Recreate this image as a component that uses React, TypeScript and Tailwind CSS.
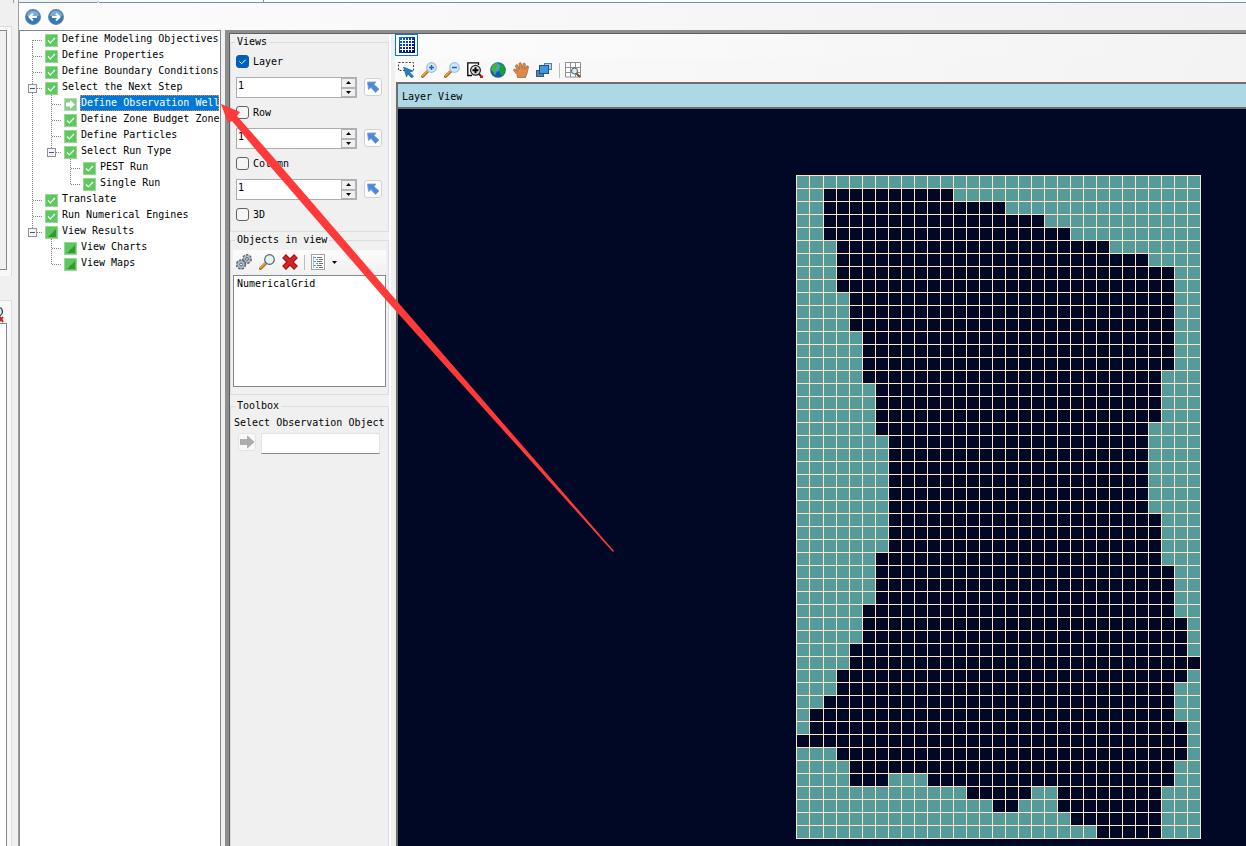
import { useState } from "react";
import type { ReactNode } from "react";
import clsx from "clsx";

type Guide = "first" | "tee" | "end" | "line" | "blank";
type NodeIcon = "check" | "arrow" | "pending";

type TreeRow = {
  label: string;
  guides: Guide[];
  icon: NodeIcon;
  expanded?: boolean;
};

const TREE: TreeRow[] = [
  { label: "Define Modeling Objectives", guides: ["first"], icon: "check" },
  { label: "Define Properties", guides: ["tee"], icon: "check" },
  { label: "Define Boundary Conditions", guides: ["tee"], icon: "check" },
  { label: "Select the Next Step", guides: ["tee"], icon: "check", expanded: true },
  { label: "Define Observation Well", guides: ["line", "tee"], icon: "arrow" },
  { label: "Define Zone Budget Zone", guides: ["line", "tee"], icon: "check" },
  { label: "Define Particles", guides: ["line", "tee"], icon: "check" },
  { label: "Select Run Type", guides: ["line", "end"], icon: "check", expanded: true },
  { label: "PEST Run", guides: ["line", "blank", "tee"], icon: "check" },
  { label: "Single Run", guides: ["line", "blank", "end"], icon: "check" },
  { label: "Translate", guides: ["tee"], icon: "check" },
  { label: "Run Numerical Engines", guides: ["tee"], icon: "check" },
  { label: "View Results", guides: ["end"], icon: "pending", expanded: true },
  { label: "View Charts", guides: ["blank", "tee"], icon: "pending" },
  { label: "View Maps", guides: ["blank", "end"], icon: "pending" },
];

const COLS = 31;
const ROWS = 51;

// inactive cells as [first row, last row, first column, end column]
const INACTIVE: [number, number, number, number][] = [
  [0, 0, 0, 31],
  // west side
  [1, 4, 0, 2],
  [5, 8, 0, 3],
  [9, 11, 0, 4],
  [12, 15, 0, 5],
  [16, 19, 0, 6],
  [20, 28, 0, 7],
  [29, 32, 0, 6],
  [33, 35, 0, 5],
  [36, 37, 0, 4],
  [38, 39, 0, 3],
  [40, 40, 0, 2],
  [41, 42, 0, 1],
  [44, 44, 0, 3],
  [45, 46, 0, 4],
  // east side
  [1, 1, 12, 31],
  [2, 2, 16, 31],
  [3, 3, 19, 31],
  [4, 4, 21, 31],
  [5, 5, 24, 31],
  [6, 6, 27, 31],
  [7, 14, 29, 31],
  [15, 18, 28, 31],
  [19, 25, 27, 31],
  [26, 29, 28, 31],
  [30, 33, 29, 31],
  [34, 36, 30, 31],
  [38, 38, 30, 31],
  [39, 41, 29, 31],
  [42, 44, 30, 31],
  [45, 46, 29, 31],
  [47, 50, 28, 31],
  // south side
  [46, 46, 7, 10],
  [47, 47, 0, 13],
  [47, 47, 18, 20],
  [48, 48, 0, 15],
  [48, 48, 17, 20],
  [49, 49, 0, 21],
  [50, 50, 0, 23],
];

const colX = (c: number) => c * 13 + (c >= 2 ? 1 : 0);
const rowY = (r: number) => r * 13;

function NumericalGrid() {
  return (
    <svg
      width={405}
      height={664}
      shapeRendering="crispEdges"
      className="block shrink-0"
      role="img"
      aria-label="NumericalGrid"
    >
      {INACTIVE.map(([r0, r1, c0, c1]) => (
        <rect
          key={`${r0}-${c0}-${c1}`}
          x={colX(c0)}
          y={rowY(r0)}
          width={colX(c1) - colX(c0)}
          height={rowY(r1 + 1) - rowY(r0)}
          fill="#569b9b"
        />
      ))}
      {Array.from({ length: COLS + 1 }, (_, c) => (
        <rect key={`c${c}`} x={colX(c)} y={0} width={1} height={664} fill="#ffe4c4" />
      ))}
      {Array.from({ length: ROWS + 1 }, (_, r) => (
        <rect key={`r${r}`} x={0} y={rowY(r)} width={405} height={1} fill="#ffe4c4" />
      ))}
    </svg>
  );
}

function GuideCell({ guide, box }: { guide: Guide; box: boolean }) {
  const top = guide === "first" ? 9 : 0;
  const bottom = guide === "end" ? 9 : 16;
  return (
    <svg width={19} height={16} className="shrink-0" shapeRendering="crispEdges" aria-hidden>
      {guide !== "blank" && (
        <path d={`M9.5 ${top}V${bottom}`} stroke="#808080" strokeDasharray="1 1" />
      )}
      {guide !== "blank" && guide !== "line" && (
        <path d="M10 9.5H19" stroke="#808080" strokeDasharray="1 1" />
      )}
      {box && (
        <>
          <rect x={5.5} y={5.5} width={8} height={8} fill="#f6f6f6" stroke="#919191" />
          <path d="M7 9.5h5" stroke="#3c55a0" />
        </>
      )}
    </svg>
  );
}

function StepIcon({ icon }: { icon: NodeIcon }) {
  return (
    <svg width={13} height={13} viewBox="0 0 13 13" className="mt-[3px] ml-[3px] shrink-0" aria-hidden>
      <rect width={13} height={13} fill={icon === "arrow" ? "#b4dcb4" : "#9ad49a"} />
      <rect x={1} y={1} width={11} height={11} fill={icon === "arrow" ? "#84cf84" : "#5cc95c"} />
      {icon === "check" && (
        <path d="M3 6.5L5.3 8.8L10 4" fill="none" stroke="#fff" strokeWidth={1.2} />
      )}
      {icon === "arrow" && <path d="M2 4.500h4V2l5 4.500l-5 4.500V8.500H2z" fill="#fff" />}
      {icon === "pending" && <path d="M11 3V11H3z" fill="#379437" />}
    </svg>
  );
}

function StepTree() {
  const [selected, setSelected] = useState("Define Observation Well");
  return (
    <nav
      aria-label="Workflow"
      className="w-[202px] shrink-0 border-x border-t border-[#828790] bg-white pl-[3px]"
    >
      <ul>
        {TREE.map((row) => {
          const active = row.label === selected;
          return (
            <li key={row.label} className="flex h-4">
              {row.guides.map((g, i) => (
                <GuideCell
                  key={i}
                  guide={g}
                  box={Boolean(row.expanded) && i === row.guides.length - 1}
                />
              ))}
              <StepIcon icon={row.icon} />
              <button
                type="button"
                onClick={() => setSelected(row.label)}
                className={clsx(
                  "ml-[3px] shrink-0 pl-px text-left leading-[16px] whitespace-nowrap",
                  active
                    ? "bg-[#0078d7] text-white outline-1 -outline-offset-1 outline-[#ff8728] outline-dotted"
                    : "text-black"
                )}
              >
                <span className="block h-4 leading-[15px]">{row.label}</span>
              </button>
            </li>
          );
        })}
      </ul>
    </nav>
  );
}

function NavCircle({ label, back }: { label: string; back?: boolean }) {
  return (
    <button type="button" aria-label={label} className="h-4 w-4">
      <svg width={16} height={16} viewBox="0 0 16 16" aria-hidden>
        <circle cx={8} cy={8} r={7.3} fill="#2f78bd" stroke="#62809c" strokeWidth={1.3} />
        <path d="M2 7a6 5.500 0 0 1 12 0q-6 2-12 0z" fill="#76ace0" />
        <path
          d={back ? "M12 8H5M8 4.500L4.500 8L8 11.500" : "M4 8h7M8 4.500L11.500 8L8 11.500"}
          fill="none"
          stroke="#fff"
          strokeWidth={2}
        />
      </svg>
    </button>
  );
}

function Group({
  title,
  className,
  children,
}: {
  title: string;
  className?: string;
  children: ReactNode;
}) {
  return (
    <fieldset className={clsx("min-w-0 border border-[#dcdcdc]", className)}>
      <legend className="ml-1 px-[2px] leading-[14px]">{title}</legend>
      {children}
    </fieldset>
  );
}

function ViewRow({ name, initial }: { name: string; initial?: boolean }) {
  const [on, setOn] = useState(Boolean(initial));
  const [value, setValue] = useState(1);
  return (
    <div className="mb-1">
      <CheckLine name={name} on={on} onChange={setOn} />
      <div className="mt-[6px] flex h-[21px]">
        <div className="flex w-[121px] border border-[#abadb3] bg-white">
          <input
            type="text"
            aria-label={`${name} number`}
            value={value}
            onChange={(e) => setValue(Number(e.target.value) || 1)}
            className="min-w-0 flex-1 px-px pb-[3px] leading-[14px] outline-none"
          />
          <div className="flex w-[15px] flex-col">
            <SpinButton label={`Increase ${name}`} up onClick={() => setValue(value + 1)} />
            <SpinButton
              label={`Decrease ${name}`}
              onClick={() => setValue(Math.max(1, value - 1))}
            />
          </div>
        </div>
        <button
          type="button"
          aria-label={`Pick ${name}`}
          className="mt-px ml-[7px] flex h-[18px] w-[18px] items-center justify-center rounded-[3px] border border-[#d0d0d0] bg-[#fdfdfd]"
        >
          <svg width={14} height={14} viewBox="0 0 14 14" aria-hidden>
            <path
              d="M1.500 2h8.500L8 4.500l5 4.500l-3.500 3.500l-4.500-5L2.500 9.500z"
              fill="#4c8ae0"
              stroke="#7b9cc9"
              strokeWidth={0.8}
            />
          </svg>
        </button>
      </div>
    </div>
  );
}

function SpinButton({ label, up, onClick }: { label: string; up?: boolean; onClick: () => void }) {
  return (
    <button
      type="button"
      aria-label={label}
      onClick={onClick}
      className="flex flex-1 items-center justify-center border border-[#b4b4b4] bg-[#f0f0f0]"
    >
      <svg width={5} height={3} viewBox="0 0 5 3" aria-hidden>
        <path d={up ? "M0 3L2.500 0L5 3z" : "M0 0h5L2.500 3z"} />
      </svg>
    </button>
  );
}

function CheckLine({
  name,
  on,
  onChange,
}: {
  name: string;
  on: boolean;
  onChange: (v: boolean) => void;
}) {
  return (
    <label className="flex h-5 items-center gap-1">
      <span className="relative flex h-[13px] w-[13px]">
        <input
          type="checkbox"
          checked={on}
          onChange={(e) => onChange(e.target.checked)}
          className="h-[13px] w-[13px] appearance-none rounded-[3px] border border-[#626262] bg-[#f5f5f5] checked:border-[#005fb8] checked:bg-[#005fb8]"
        />
        {on && (
          <svg viewBox="0 0 13 13" className="pointer-events-none absolute inset-0" aria-hidden>
            <path d="M3.500 6.500L5.700 8.700L9.700 4.700" fill="none" stroke="#fff" />
          </svg>
        )}
      </span>
      {name}
    </label>
  );
}

function ToolButton({ label, children }: { label: string; children: ReactNode }) {
  return (
    <button type="button" aria-label={label} title={label} className="h-4 w-4 shrink-0">
      <svg width={16} height={16} viewBox="0 0 16 16" aria-hidden>
        {children}
      </svg>
    </button>
  );
}

function Lens({ sign }: { sign?: "plus" | "minus" }) {
  return (
    <>
      <path d="M1.500 14.500L7 9" stroke="#a8641a" strokeWidth={3} strokeLinecap="round" />
      <path d="M1.500 14L6.500 9" stroke="#f0a63c" strokeWidth={1.5} strokeLinecap="round" />
      <circle
        cx={10.5}
        cy={5.5}
        r={4.8}
        fill={sign ? "#d3e8fb" : "#e2f3f8"}
        stroke={sign ? "#9cc0e6" : "#586470"}
        strokeWidth={1.2}
      />
      {sign && <path d="M8 5.500h5" stroke="#1c62c4" strokeWidth={1.5} />}
      {sign === "plus" && <path d="M10.500 3v5" stroke="#1c62c4" strokeWidth={1.5} />}
    </>
  );
}

function Gear({ cx, cy, r }: { cx: number; cy: number; r: number }) {
  return (
    <>
      <circle cx={cx} cy={cy} r={r} fill="#9aa8b4" stroke="#5d6a76" strokeWidth={2.6} strokeDasharray="2.2 1" />
      <circle cx={cx} cy={cy} r={r - 0.3} fill="#aebbc6" />
      <circle cx={cx} cy={cy} r={1.4} fill="#eef2f5" stroke="#4d5a66" strokeWidth={0.9} />
    </>
  );
}

function ObjectsToolbar() {
  return (
    <div className="flex h-[25px] items-center rounded-tr-[3px] bg-linear-to-b from-[#fcfcfc] to-[#f0f0f0] pb-px pl-[3px]">
      <div className="flex gap-[7px]">
        <ToolButton label="Settings">
          <Gear cx={11} cy={5} r={3.7} />
          <Gear cx={5} cy={10.5} r={3.9} />
        </ToolButton>
        <ToolButton label="Zoom to object">
          <Lens />
        </ToolButton>
        <ToolButton label="Remove">
          <path d="M2 2L14 14M14 2L2 14" stroke="#8e1010" strokeWidth={5.4} />
          <path d="M2.500 2.500L13.500 13.500M13.500 2.500L2.500 13.500" stroke="#d92222" strokeWidth={3.6} />
        </ToolButton>
      </div>
      <span className="mx-[6px] h-[15px] w-px bg-[#bdbdbd]" />
      <button type="button" aria-label="List options" className="flex items-center gap-[7px]">
        <svg width={14} height={16} viewBox="0 0 14 16" shapeRendering="crispEdges" aria-hidden>
          <rect x={0.5} y={0.5} width={13} height={15} fill="#fff" stroke="#a3a3a3" />
          <path d="M2.500 2v12" stroke="#9cc3da" />
          <path d="M3 3.500h2M3 7.500h2M3 11.500h2M5 5.500h2M5 9.500h2M5 13.500h2" stroke="#5b93b5" />
          <path d="M6 3.500h5M6 7.500h5M6 11.500h5M8 5.500h4M8 9.500h4M8 13.500h4" stroke="#707070" />
        </svg>
        <svg width={5} height={3} viewBox="0 0 5 3" aria-hidden>
          <path d="M0 0h5L2.500 3z" />
        </svg>
      </button>
    </div>
  );
}

function SidePanel() {
  const [flag3d, setFlag3d] = useState(false);
  return (
    <aside className="flex w-[165px] shrink-0 flex-col border-r-4 border-[#f0f0f0] pt-px">
      <div className="flex flex-1 flex-col border-r-2 border-white">
        <Group title="Views" className="h-[197px]">
          <div className="px-[5px] pt-[2px]">
            <ViewRow name="Layer" initial />
            <ViewRow name="Row" />
            <ViewRow name="Column" />
            <CheckLine name="3D" on={flag3d} onChange={setFlag3d} />
          </div>
        </Group>
        <Group title="Objects in view" className="mt-px h-[162px]">
          <div className="px-[2px] pt-[3px]">
            <ObjectsToolbar />
            <ul className="h-[112px] border border-[#828790] bg-white px-[3px] pt-px leading-[14px]">
              <li>NumericalGrid</li>
            </ul>
          </div>
        </Group>
        <Group title="Toolbox" className="mt-1 flex-1 border-b-0">
          <div className="pt-[3px] pl-[3px]">
            <label htmlFor="observation" className="block leading-[14px] whitespace-nowrap">
              Select Observation Object
            </label>
            <div className="mt-[3px] flex pl-1">
              <button
                type="button"
                disabled
                aria-label="Use selected object"
                className="flex h-[18px] w-[18px] items-center justify-center rounded-[3px] border border-[#e4e4e4] bg-[#f9f9f9]"
              >
                <svg width={14} height={14} viewBox="0 0 14 14" aria-hidden>
                  <path d="M0 4.500h7.500V1L14 7l-6.500 6V9.500H0z" fill="#adadad" stroke="#979797" strokeWidth={0.6} />
                </svg>
              </button>
              <input
                id="observation"
                type="text"
                className="ml-[5px] h-[21px] w-[119px] border border-[#e3e3e3] border-b-[#8a8a8a] bg-white px-1 outline-none"
              />
            </div>
          </div>
        </Group>
      </div>
    </aside>
  );
}

function MapToolbar() {
  return (
    <div className="flex h-6 items-center bg-linear-to-r from-[#fafafa] to-[#f3f3f3] pl-[3px]">
      <div className="flex gap-[7px]">
        <ToolButton label="Select">
          <rect x={0.5} y={0.5} width={15} height={8} fill="none" stroke="#444" strokeDasharray="2 1.500" />
          <path d="M5.500 5l9.500 4l-3.500 1.200l4 4l-1.700 1.700l-4-4L8.500 15z" fill="#217fc4" stroke="#14598f" strokeWidth={0.6} />
        </ToolButton>
        <ToolButton label="Zoom in">
          <Lens sign="plus" />
        </ToolButton>
        <ToolButton label="Zoom out">
          <Lens sign="minus" />
        </ToolButton>
        <ToolButton label="Zoom window">
          <path d="M11.500 3V0.800H0.800V13.500H5" fill="#fff" stroke="#000" strokeWidth={1.3} />
          <circle cx={8.5} cy={8.3} r={4.9} fill="#e4e4e4" stroke="#222" strokeWidth={1.2} />
          <path d="M5.500 8.300h6M8.500 5.300v6" stroke="#000" strokeWidth={2} />
          <path d="M12 12l2 2" stroke="#222" strokeWidth={2} />
          <rect x={13} y={13.5} width={3} height={2.5} fill="#e01010" />
        </ToolButton>
        <ToolButton label="Full extent">
          <circle cx={8} cy={8} r={7.8} fill="#1857b8" />
          <circle cx={6.5} cy={5.5} r={4} fill="#4a9be8" />
          <path d="M2 3.500Q5 0 8 1L7 3.500L8 5L5 7L6.500 10L5 13.500L3 10L1 7.500z" fill="#3fb53f" />
          <path d="M9.500 1Q14 2 15.500 7L14 12L11 14L10 10.500L8.500 8L10 5z" fill="#18a032" />
        </ToolButton>
        <ToolButton label="Pan">
          <path
            d="M4.500 15.500L4 12.500L0.500 8.500Q0.500 6.800 2.200 7.300L4.200 9L2.500 3.500Q3.200 2 4.500 3L6.300 7L6 1.500Q7.300 0 8.300 1.500L9 6.500L10.300 1.500Q11.800 0.500 12.300 2L11.800 7.500L13.500 4Q15 3.300 15.500 4.800L14 11.500L12.500 15.500z"
            fill="#d98a4c"
            stroke="#a25d28"
            strokeWidth={0.7}
          />
        </ToolButton>
        <ToolButton label="Order">
          <rect x={8.5} y={1.5} width={7} height={6} fill="#b5cfe6" stroke="#587fa3" />
          <rect x={0.5} y={8.5} width={7} height={6} fill="#5b7f9f" stroke="#3b5d7d" />
          <rect x={3.5} y={3.5} width={9} height={8} fill="#3e96e0" stroke="#1c5487" />
        </ToolButton>
      </div>
      <span className="mr-[5px] ml-[7px] h-[15px] w-px bg-[#bdbdbd]" />
      <ToolButton label="Inspect cell">
        <path
          d="M0.500 0.500h15v14.500h-15zM0.500 5.500h15M0.500 10.500h15M5.500 0.500v14.500M10.500 0.500v14.500"
          fill="#fff"
          stroke="#8f8f8f"
        />
        <path d="M11.500 11.500l3.500 3.500" stroke="#6b4a2a" strokeWidth={2} />
        <circle cx={9.5} cy={9} r={3} fill="#d6ecf8" stroke="#555" />
      </ToolButton>
    </div>
  );
}

function MapView() {
  return (
    <main className="flex min-w-0 flex-1 flex-col">
      <div className="flex h-6 items-start bg-linear-to-r from-[#fcfcfc] to-[#f3f3f3]">
        <button
          type="button"
          aria-label="Toggle grid"
          className="flex h-[22px] w-[23px] items-center justify-center border border-[#0078d7] bg-white"
        >
          <svg width={16} height={16} viewBox="0 0 16 16" shapeRendering="crispEdges" aria-hidden>
            <defs>
              <linearGradient id="gridFill" x1="0" y1="0" x2="1" y2="1">
                <stop offset="0" stopColor="#1478ff" />
                <stop offset="0.600" stopColor="#00208c" />
                <stop offset="1" stopColor="#000a4a" />
              </linearGradient>
            </defs>
            <rect width={16} height={16} fill="url(#gridFill)" />
            <path
              d="M3.500 1v14M6.500 1v14M9.500 1v14M12.500 1v14M1 3.500h14M1 6.500h14M1 9.500h14M1 12.500h14"
              stroke="#fff"
            />
          </svg>
        </button>
      </div>
      <MapToolbar />
      <section className="ml-px flex flex-1 flex-col border-t-2 border-l-2 border-[#6e6e6e]">
        <h1 className="h-[23px] bg-[#add8e6] pl-1 leading-[25px]">Layer View</h1>
        <div className="min-h-0 flex-1 overflow-hidden border-t-2 border-[#6e6e6e] bg-[#000826] pt-[66px] pl-[398px]">
          <NumericalGrid />
        </div>
      </section>
    </main>
  );
}

function LeftStrip() {
  return (
    <div className="flex w-[19px] shrink-0 flex-col border-r border-[#a0a0a0] bg-[#f0f0f0]">
      <div className="mb-[23px] h-[3px] w-[14px] border-r border-[#a0a0a0]" />
      <div className="h-[250px] w-3 border-t border-r border-[#dcdcdc] bg-[#f8f8f8] pt-[3px]">
        <div className="h-60 w-[7px] border-y border-r border-[#828790] bg-[#f0f0f0]" />
      </div>
      <div className="mt-6 flex w-3 flex-1 flex-col border-t border-r border-[#dcdcdc] bg-[#f8f8f8] pt-1">
        <svg width={5} height={18} viewBox="0 0 5 18" aria-hidden>
          <path d="M-4 5Q2 0 2.500 7Q2 12-4 10" fill="#d5f0f2" stroke="#333f4a" strokeWidth={1.3} />
          <path d="M-2 18L3 12M0 12l3 5" stroke="#c41f1f" strokeWidth={1.8} />
        </svg>
        <div className="w-[7px] flex-1 border-t border-r border-[#828790] bg-white" />
      </div>
    </div>
  );
}

export default function App() {
  return (
    <div className="relative flex h-screen overflow-hidden bg-[#f0f0f0] font-['DejaVu_Sans_Mono',monospace] text-[10px] text-black">
      <LeftStrip />
      <div className="flex min-w-0 flex-1 flex-col">
        <header className="h-[30px] shrink-0 bg-linear-to-r from-[#fcfcfc] to-[#f2f2f2]">
          <div className="flex h-[3px]">
            <div className="w-[80px] rounded-br-[3px] border-b border-[#6c93c0] bg-[#f3f2e6]" />
            <div className="w-[164px] border-b border-[#6c93c0] bg-white" />
            <div className="flex-1 border-b border-l border-[#6c93c0] bg-white" />
          </div>
          <div className="flex gap-[7px] pt-[6px] pl-[6px]">
            <NavCircle label="Back" back />
            <NavCircle label="Forward" />
          </div>
        </header>
        <div className="flex min-h-0 flex-1">
          <StepTree />
          <div className="ml-1 flex min-w-0 flex-1 border-t-[3px] border-l-4 border-[#8e8e8e]">
            <div className="flex min-w-0 flex-1 border-t border-l border-[#5f5f5f]">
              <SidePanel />
              <MapView />
            </div>
          </div>
        </div>
      </div>
      {/* callout arrow pointing at the selected step */}
      <svg width={620} height={560} className="pointer-events-none absolute top-0 left-0" aria-hidden>
        <path
          d="M221 104L240 112L237 116L267 150L396 300L614 551L613 552L386 300L256 150L232 121L228 123z"
          fill="#ff3a3a"
        />
      </svg>
    </div>
  );
}
